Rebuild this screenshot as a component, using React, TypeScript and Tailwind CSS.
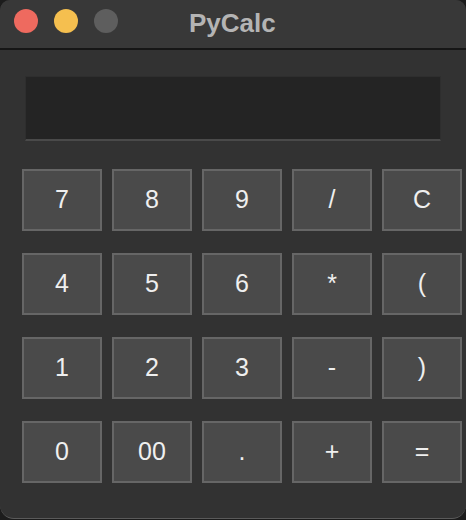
const keys = [
  ["7", "8", "9", "/", "C"],
  ["4", "5", "6", "*", "("],
  ["1", "2", "3", "-", ")"],
  ["0", "00", ".", "+", "="],
];

export default function App() {
  return (
    <div className="h-[520px] w-[466px] bg-[#1c1c1c] font-['Helvetica','Liberation_Sans',Arial,sans-serif]">
      <div className="flex h-[519px] flex-col overflow-hidden rounded-t-[10px] rounded-b-[14px] border-b border-[#5a5a5a] bg-[#323232]">
        {/* title bar */}
        <div className="relative flex h-[50px] shrink-0 items-center border-b-2 border-[#161616] bg-[#383838]">
          <div className="flex gap-4 pl-[14px] pb-[6px]">
            <span className="h-6 w-6 rounded-full bg-[#ee6a5f]" />
            <span className="h-6 w-6 rounded-full bg-[#f5bf4f]" />
            <span className="h-6 w-6 rounded-full bg-[#5e5e5e]" />
          </div>
          <div className="absolute left-[189px] top-[4px] text-[26px] font-bold text-[#b4b4b4]">PyCalc</div>
        </div>

        <div className="px-[22px] pt-[26px]">
          {/* display */}
          <div className="ml-[3px] mr-[3px] h-[65px] border border-[#2e2e2e] border-b-2 border-b-[#4a4a4a] bg-[#242424]" />

          <div className="mt-[28px] grid grid-cols-[repeat(5,80px)] gap-x-[10px] gap-y-[22px]">
            {keys.flat().map((k) => (
              <button
                key={k}
                className="flex h-[62px] items-center justify-center border-2 border-[#666666] bg-[#4a4a4a] text-[25px] text-[#efefef]"
              >
                {k}
              </button>
            ))}
          </div>
        </div>
      </div>
    </div>
  );
}
